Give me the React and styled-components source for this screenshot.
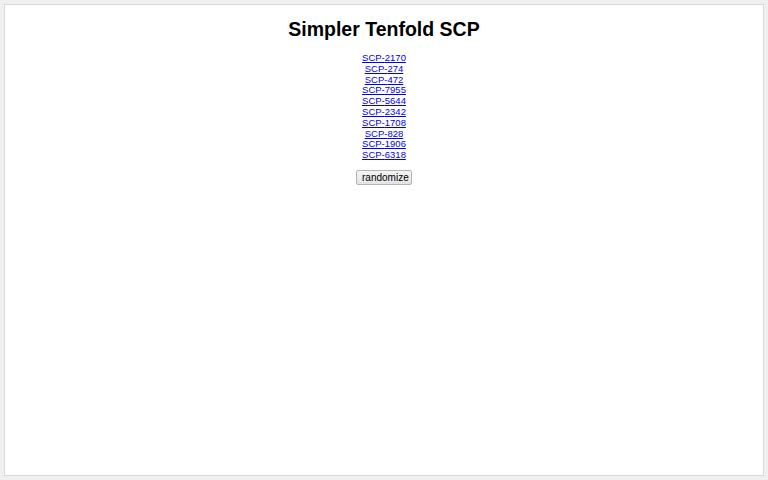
import styled, { createGlobalStyle } from 'styled-components'

const GlobalStyle = createGlobalStyle`
  html, body {
    margin: 0;
    padding: 0;
    height: 100%;
    background: #f0f0f0;
    font-family: "Liberation Sans", Arial, sans-serif;
  }
  #root {
    height: 100%;
  }
`

const ids = ['2170', '274', '472', '7955', '5644', '2342', '1708', '828', '1906', '6318']

function App() {
  return (
    <Page>
      <GlobalStyle />
      <Card>
        <Title>Simpler Tenfold SCP</Title>
        <List>
          {ids.map((id) => (
            <Item key={id}>
              <Link href={`#scp-${id}`}>SCP-{id}</Link>
            </Item>
          ))}
        </List>
        <Button type="button">randomize</Button>
      </Card>
    </Page>
  )
}

export default App

const Page = styled.div`
  box-sizing: border-box;
  height: 100%;
  padding: 4px;
  display: flex;
`

const Card = styled.div`
  flex: 1;
  background: #fff;
  border: 1px solid #d8d8d8;
  display: flex;
  flex-direction: column;
  align-items: center;
  padding-top: 13px;
`

const Title = styled.h1`
  margin: 0 0 12px;
  font-size: 19.5px;
  font-weight: bold;
  color: #000;
  line-height: 23px;
`

const List = styled.div`
  display: flex;
  flex-direction: column;
  align-items: center;
  margin-bottom: 9px;
`

const Item = styled.div`
  font-size: 9.5px;
  line-height: 10.8px;
`

const Link = styled.a`
  color: #0000ee;
  text-decoration: underline;
`

const Button = styled.button`
  font-family: "Liberation Sans", Arial, sans-serif;
  font-size: 10px;
  padding: 1px 5px;
  width: 56px;
  height: 15px;
  line-height: 11px;
  background: linear-gradient(#f4f4f4, #e4e4e4);
  border: 1px solid #b4b4b4;
  border-radius: 2px;
  color: #000;
`
